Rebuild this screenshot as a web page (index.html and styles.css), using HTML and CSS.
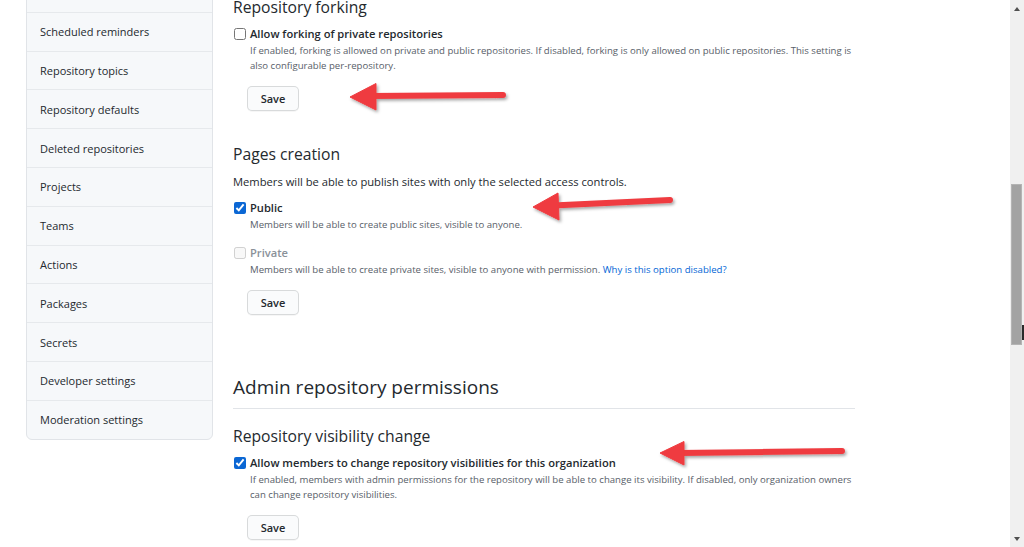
FILE: index.html
```html
<!DOCTYPE html>
<html lang="en">
<head>
<meta charset="utf-8">
<title>Member privileges</title>
<link rel="stylesheet" href="styles.css">
</head>
<body>
<div class="page">
  <div class="layout">
    <nav class="sidebar">
      <a class="menu-item menu-item-hidden" aria-hidden="true"></a>
      <a class="menu-item">Scheduled reminders</a>
      <a class="menu-item">Repository topics</a>
      <a class="menu-item">Repository defaults</a>
      <a class="menu-item">Deleted repositories</a>
      <a class="menu-item">Projects</a>
      <a class="menu-item">Teams</a>
      <a class="menu-item">Actions</a>
      <a class="menu-item">Packages</a>
      <a class="menu-item">Secrets</a>
      <a class="menu-item">Developer settings</a>
      <a class="menu-item">Moderation settings</a>
    </nav>

    <main class="main">
      <section class="block">
        <h3 class="subhead">Repository forking</h3>
        <div class="check check-first">
          <input type="checkbox" class="box">
          <div class="check-body">
            <label class="check-label">Allow forking of private repositories</label>
            <p class="note">If enabled, forking is allowed on private and public repositories. If disabled, forking is only allowed on public repositories. This setting is also configurable per-repository.</p>
          </div>
        </div>
        <button class="btn">Save</button>
      </section>

      <section class="block block-pages">
        <h3 class="subhead">Pages creation</h3>
        <p class="lead">Members will be able to publish sites with only the selected access controls.</p>
        <div class="check check-first">
          <input type="checkbox" class="box" checked>
          <div class="check-body">
            <label class="check-label">Public</label>
            <p class="note">Members will be able to create public sites, visible to anyone.</p>
          </div>
        </div>
        <div class="check check-next">
          <input type="checkbox" class="box" disabled>
          <div class="check-body">
            <label class="check-label is-disabled">Private</label>
            <p class="note">Members will be able to create private sites, visible to anyone with permission. <a class="link">Why is this option disabled?</a></p>
          </div>
        </div>
        <button class="btn">Save</button>
      </section>

      <h2 class="section-title">Admin repository permissions</h2>

      <section class="block block-visibility">
        <h3 class="subhead">Repository visibility change</h3>
        <div class="check check-first">
          <input type="checkbox" class="box" checked>
          <div class="check-body">
            <label class="check-label">Allow members to change repository visibilities for this organization</label>
            <p class="note">If enabled, members with admin permissions for the repository will be able to change its visibility. If disabled, only organization owners can change repository visibilities.</p>
          </div>
        </div>
        <button class="btn">Save</button>
      </section>
    </main>
  </div>

  <svg class="annotations" width="1010" height="547" viewBox="0 0 1010 547" aria-hidden="true">
    <defs>
      <filter id="shadow" x="-10%" y="-50%" width="120%" height="200%">
        <feDropShadow dx="1.5" dy="2" stdDeviation="1.5" flood-color="#000" flood-opacity="0.35"/>
      </filter>
    </defs>
    <g fill="#ef3b3f" stroke="#ef3b3f" filter="url(#shadow)">
      <line x1="370" y1="96" x2="503" y2="95" stroke-width="6" stroke-linecap="round"/>
      <polygon points="350,97 376,83.5 376,110" stroke-width="1" stroke-linejoin="round"/>
    </g>
    <g fill="#ef3b3f" stroke="#ef3b3f" filter="url(#shadow)">
      <line x1="553" y1="205.5" x2="670" y2="200" stroke-width="6" stroke-linecap="round"/>
      <polygon points="533,207 558,193 559,220" stroke-width="1" stroke-linejoin="round"/>
    </g>
    <g fill="#ef3b3f" stroke="#ef3b3f" filter="url(#shadow)">
      <line x1="678" y1="453" x2="842" y2="451" stroke-width="6" stroke-linecap="round"/>
      <polygon points="660,453 684,441.5 684,465" stroke-width="1" stroke-linejoin="round"/>
    </g>
  </svg>
</div>

<div class="scrollbar" aria-hidden="true">
  <div class="sb-btn"><span class="tri-up"></span></div>
  <div class="sb-track"><div class="sb-thumb"></div></div>
  <div class="sb-btn sb-btn-down"><span class="tri-down"></span></div>
  <span class="cursor-mark"></span>
</div>
</body>
</html>
```
FILE: styles.css
```css
* { box-sizing: border-box; }

html, body {
  margin: 0;
  height: 100%;
  overflow: hidden;
}

body {
  display: flex;
  background: #fff;
  color: #24292e;
  font-family: "Open Sans", "Noto Sans", sans-serif;
}

.page {
  position: relative;
  flex: 1;
  height: 547px;
  overflow: hidden;
}

.layout {
  display: flex;
  align-items: flex-start;
  gap: 21px;
  padding-left: 26px;
  margin-top: -27px;
}

/* Sidebar menu */
.sidebar {
  display: flex;
  flex-direction: column;
  width: 187px;
  flex: none;
  background: #f6f8fa;
  border: 1px solid #e1e4e8;
  border-radius: 6px;
}

.menu-item {
  display: flex;
  align-items: center;
  height: 38.8px;
  padding-left: 13px;
  font-size: 11px;
  color: #24292e;
  border-bottom: 1px solid #e6e9ec;
}

.menu-item:last-child {
  border-bottom: 0;
  height: 37.8px;
}

/* Main column */
.main {
  width: 622px;
  margin-left: -1px;
  padding-top: 23px;
}

.subhead {
  margin: 0;
  font-size: 15.7px;
  font-weight: 400;
  line-height: 22px;
  color: #24292e;
}

.lead {
  margin: 8px 0 0;
  font-size: 11.2px;
  line-height: 18px;
}

.check {
  display: grid;
  grid-template-columns: 17px 1fr;
}

.check-first { margin-top: 8px; }
.block-pages .check-first { margin-top: 9px; }
.check-next { margin-top: 13.5px; }

.box {
  width: 12px;
  height: 12px;
  margin: 2px 0 0 1px;
  accent-color: #0b67d4;
}

.check-label {
  display: block;
  font-size: 11.15px;
  font-weight: 600;
  line-height: 16px;
}

.check-label.is-disabled {
  color: #8a9199;
}

.note {
  margin: 1px 0 0;
  font-size: 9.6px;
  line-height: 15px;
  color: #586069;
}

.link {
  color: #0366d6;
}

.btn {
  display: block;
  margin: 12.5px 0 0 14px;
  width: 52px;
  height: 25px;
  padding: 0;
  font-family: inherit;
  font-size: 11px;
  font-weight: 600;
  color: #24292e;
  background: #fafbfc;
  border: 1px solid rgba(27, 31, 35, 0.15);
  border-radius: 5px;
  box-shadow: 0 1px 0 rgba(27, 31, 35, 0.04);
}

.block-visibility .btn { margin-top: 13.5px; }

.block-pages { margin-top: 32px; }

.section-title {
  margin: 59px 0 0;
  padding-bottom: 8px;
  font-size: 19px;
  font-weight: 400;
  line-height: 26px;
  border-bottom: 1px solid #e1e4e8;
}

.block-visibility { margin-top: 16px; }

/* Annotation arrows drawn over the screenshot */
.annotations {
  position: absolute;
  left: 0;
  top: 0;
  pointer-events: none;
}

/* Browser scrollbar */
.scrollbar {
  position: relative;
  display: flex;
  flex-direction: column;
  flex: none;
  width: 14px;
  height: 547px;
  background: #f0f0f0;
}

.sb-btn {
  display: flex;
  align-items: center;
  justify-content: center;
  height: 17px;
  flex: none;
}

.tri-up, .tri-down {
  width: 0;
  height: 0;
  border-left: 3.5px solid transparent;
  border-right: 3.5px solid transparent;
}

.tri-up { border-bottom: 4px solid #505050; }
.tri-down { border-top: 4px solid #505050; }

.sb-track {
  flex: 1;
  padding: 167px 0 0 1px;
}

.sb-thumb {
  width: 11px;
  height: 161px;
  background: #a3a3a3;
  border: 1px solid #b4b4b4;
}

.cursor-mark {
  position: absolute;
  right: 0;
  top: 325px;
  width: 2px;
  height: 15px;
  background: #2b2b2b;
}
```
